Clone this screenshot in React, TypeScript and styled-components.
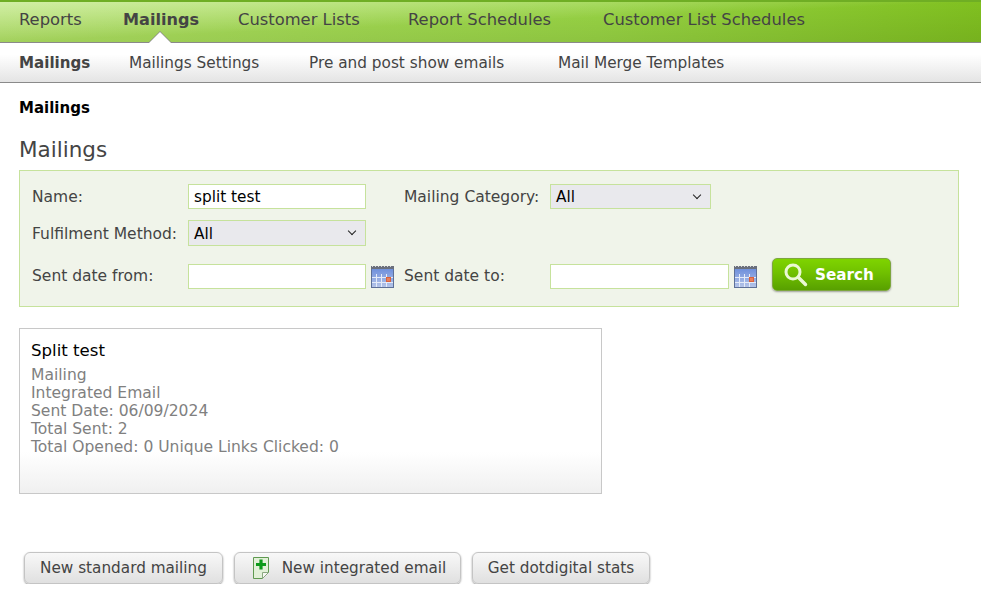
import React from 'react';
import styled, { createGlobalStyle } from 'styled-components';

const GlobalStyle = createGlobalStyle`
  html, body {
    margin: 0;
    padding: 0;
    background: #fff;
    font-family: 'DejaVu Sans', Verdana, sans-serif;
    font-size: 15px;
    color: #444;
  }
`;

const mainTabs = [
  { label: 'Reports', width: 104 },
  { label: 'Mailings', width: 115, active: true },
  { label: 'Customer Lists', width: 170 },
  { label: 'Report Schedules', width: 195 },
  { label: 'Customer List Schedules', width: 260 },
];

const subTabs = [
  { label: 'Mailings', width: 110, active: true },
  { label: 'Mailings Settings', width: 180 },
  { label: 'Pre and post show emails', width: 249 },
  { label: 'Mail Merge Templates', width: 200 },
];

const CalendarIcon = () => (
  <CalendarSvg viewBox="0 0 23 22" width="23" height="22">
    <defs>
      <linearGradient id="calBody" x1="0" y1="0" x2="0" y2="1">
        <stop offset="0" stopColor="#6f90dc" />
        <stop offset="1" stopColor="#b4c4e8" />
      </linearGradient>
    </defs>
    <rect x="0" y="0" width="23" height="22" fill="#5d7098" />
    <rect x="0" y="0" width="23" height="3" fill="#6a6f7c" />
    <path d="M1 0.500h1M4 0.500h1M7 0.500h1M10 0.500h1M13 0.500h1M16 0.500h1M19 0.500h1" stroke="#d8d8d8" />
    <rect x="1" y="3" width="21" height="18" fill="url(#calBody)" />
    <path d="M5.500 8v13M10.500 8v13M15.500 8v13M1 11.500h21M1 16.500h21" stroke="#e4ebf8" />
    <rect x="15.500" y="11.500" width="4" height="4" fill="#e8805c" stroke="#d9613c" />
  </CalendarSvg>
);

const SearchIcon = () => (
  <svg viewBox="0 0 24 24" width="24" height="24" fill="none">
    <circle cx="9" cy="9" r="7" stroke="#eaf8d4" strokeWidth="3" />
    <path d="M14.500 14.500l7 7" stroke="#eaf8d4" strokeWidth="3.400" strokeLinecap="round" />
  </svg>
);

const NewDocIcon = () => (
  <svg viewBox="0 0 18 24" width="18" height="24">
    <path d="M1.500 1.500h15v15l-6 6h-9z" fill="#e2f0d8" stroke="#5f9a50" />
    <path d="M16.500 16.500h-6v6z" fill="#f7f7f2" stroke="#8aa880" />
    <path d="M9 3.500v10M4 8.500h10" stroke="#0d9a1a" strokeWidth="3.200" />
  </svg>
);

export default function App() {
  return (
    <>
      <GlobalStyle />
      <MainNav>
        {mainTabs.map((tab) => (
          <MainTab key={tab.label} $width={tab.width} $active={tab.active}>
            {tab.label}
          </MainTab>
        ))}
      </MainNav>
      <SubNav>
        {subTabs.map((tab) => (
          <SubTab key={tab.label} $width={tab.width} $active={tab.active}>
            {tab.label}
          </SubTab>
        ))}
      </SubNav>
      <Content>
        <Breadcrumb>Mailings</Breadcrumb>
        <PageTitle>Mailings</PageTitle>
        <SearchForm>
          <FormRow $height={25} $gap={11}>
            <Label $width={156}>Name:</Label>
            <TextField $width={178} defaultValue="split test" />
            <Label $width={146} $indent={38}>Mailing Category:</Label>
            <SelectField $width={161}>All</SelectField>
          </FormRow>
          <FormRow $height={26} $gap={18}>
            <Label $width={156} $nudge={2}>Fulfilment Method:</Label>
            <SelectField $width={178} $nudge={2}>All</SelectField>
          </FormRow>
          <FormRow $height={25} $gap={0}>
            <Label $width={156} $nudge={-2}>Sent date from:</Label>
            <TextField $width={178} />
            <CalendarSlot><CalendarIcon /></CalendarSlot>
            <Label $width={146} $nudge={-2}>Sent date to:</Label>
            <TextField $width={179} />
            <CalendarSlot><CalendarIcon /></CalendarSlot>
            <SearchButton>
              <SearchIcon />
              Search
            </SearchButton>
          </FormRow>
        </SearchForm>
        <ResultCard>
          <CardTitle>Split test</CardTitle>
          <CardLine>Mailing</CardLine>
          <CardLine>Integrated Email</CardLine>
          <CardLine>Sent Date: 06/09/2024</CardLine>
          <CardLine>Total Sent: 2</CardLine>
          <CardLine>Total Opened: 0 Unique Links Clicked: 0</CardLine>
        </ResultCard>
        <Actions>
          <ActionButton $width={199}>New standard mailing</ActionButton>
          <ActionButton $width={227} $shift={3}>
            <NewDocIcon />
            New integrated email
          </ActionButton>
          <ActionButton $width={178}>Get dotdigital stats</ActionButton>
        </Actions>
      </Content>
    </>
  );
}

const MainNav = styled.nav`
  box-sizing: border-box;
  display: flex;
  height: 43px;
  padding-left: 19px;
  border-top: 2px solid #6fae24;
  border-bottom: 1px solid #8a8a8a;
  background:
    linear-gradient(to bottom right, rgba(255, 255, 255, 0.42) 0%, rgba(255, 255, 255, 0) 50%),
    linear-gradient(to bottom, rgba(0, 0, 0, 0) 0%, rgba(0, 0, 0, 0.08) 100%),
    linear-gradient(to right, #b0e264 0%, #98d444 61%, #80c020 100%);
`;

const MainTab = styled.div<{ $width: number; $active?: boolean }>`
  position: relative;
  width: ${(p) => p.$width}px;
  line-height: 35px;
  font-size: ${(p) => (p.$active ? 16.1 : 16.35)}px;
  font-weight: ${(p) => (p.$active ? 700 : 400)};
  color: #444;
  white-space: nowrap;
  ${(p) =>
    p.$active &&
    `&::after {
      content: '';
      position: absolute;
      left: 26px;
      bottom: -1px;
      border-left: 11px solid transparent;
      border-right: 11px solid transparent;
      border-bottom: 11px solid #fff;
      filter: drop-shadow(0 -1px 0 #8a8a8a);
    }`}
`;

const SubNav = styled.nav`
  box-sizing: border-box;
  display: flex;
  height: 40px;
  padding-left: 19px;
  border-bottom: 1px solid #8a8a8a;
  background: linear-gradient(to bottom, #fff 30%, #e4e4e4 100%);
`;

const SubTab = styled.div<{ $width: number; $active?: boolean }>`
  width: ${(p) => p.$width}px;
  line-height: 40px;
  font-size: ${(p) => (p.$active ? 15.1 : 15.3)}px;
  font-weight: ${(p) => (p.$active ? 700 : 400)};
  color: #444;
  white-space: nowrap;
`;

const Content = styled.main`
  padding: 0 22px 0 19px;
`;

const Breadcrumb = styled.div`
  margin-top: 16px;
  line-height: 18px;
  font-size: 15px;
  font-weight: 700;
  color: #000;
`;

const PageTitle = styled.h1`
  margin: 20px 0 7px;
  line-height: 26px;
  font-size: 21.500px;
  font-weight: 400;
  color: #444;
`;

const SearchForm = styled.form`
  box-sizing: border-box;
  height: 137px;
  padding: 13px 12px 0;
  border: 1px solid #c6e29c;
  background: #f0f4ea;
`;

const FormRow = styled.div<{ $height: number; $gap: number }>`
  display: flex;
  align-items: center;
  height: ${(p) => p.$height}px;
  margin-bottom: ${(p) => p.$gap}px;
`;

const Label = styled.label<{ $width: number; $indent?: number; $nudge?: number }>`
  flex: none;
  width: ${(p) => p.$width}px;
  margin-left: ${(p) => p.$indent || 0}px;
  margin-top: ${(p) => p.$nudge || 0}px;
  font-size: 15.500px;
  color: #444;
  white-space: nowrap;
`;

const TextField = styled.input<{ $width: number }>`
  box-sizing: border-box;
  flex: none;
  width: ${(p) => p.$width}px;
  height: 25px;
  padding: 0 5px;
  border: 1px solid #c6e29c;
  background: #fff;
  font-family: inherit;
  font-size: 15.300px;
  color: #000;
  outline: none;
`;

const SelectField = styled.div<{ $width: number; $nudge?: number }>`
  box-sizing: border-box;
  flex: none;
  position: relative;
  width: ${(p) => p.$width}px;
  height: 100%;
  padding: ${(p) => p.$nudge || 0}px 5px 0;
  display: flex;
  align-items: center;
  border: 1px solid #c6e29c;
  background: #e9e9ed;
  font-size: 15.300px;
  color: #000;
  &::after {
    content: '';
    position: absolute;
    right: 10px;
    top: 50%;
    width: 5px;
    height: 5px;
    margin-top: -5px;
    border-right: 1.500px solid #222;
    border-bottom: 1.500px solid #222;
    transform: rotate(45deg);
  }
`;

const CalendarSlot = styled.span`
  flex: none;
  display: flex;
  width: 38px;
  padding-left: 5px;
  box-sizing: border-box;
`;

const CalendarSvg = styled.svg`
  display: block;
`;

const SearchButton = styled.button`
  box-sizing: border-box;
  flex: none;
  display: flex;
  align-items: center;
  gap: 7px;
  width: 119px;
  height: 33px;
  margin: 0 0 5px 5px;
  padding: 2px 0 0 11px;
  border: 1px solid #7da63e;
  border-radius: 5px;
  background: linear-gradient(to bottom, #7fd400 0%, #70c000 45%, #58a000 100%);
  box-shadow: 0 1px 2px rgba(0, 0, 0, 0.35);
  font-family: inherit;
  font-size: 15.200px;
  font-weight: 700;
  color: #fff;
`;

const ResultCard = styled.section`
  box-sizing: border-box;
  width: 583px;
  height: 166px;
  margin-top: 21px;
  padding: 12px 11px 0;
  border: 1px solid #c8c8c8;
  background: linear-gradient(to bottom, #fff 0%, #fff 75%, #f0f0f0 100%);
`;

const CardTitle = styled.h2`
  margin: 0 0 5px;
  line-height: 20px;
  font-size: 16.600px;
  font-weight: 400;
  color: #000;
`;

const CardLine = styled.div`
  line-height: 18px;
  font-size: 15.550px;
  color: #808080;
`;

const Actions = styled.div`
  display: flex;
  gap: 11px;
  margin-top: 58px;
  padding-left: 5px;
`;

const ActionButton = styled.button<{ $width: number; $shift?: number }>`
  box-sizing: border-box;
  display: flex;
  align-items: center;
  justify-content: center;
  gap: 12px;
  width: ${(p) => p.$width}px;
  height: 32px;
  padding: 0 0 0 ${(p) => p.$shift || 0}px;
  border: 1px solid #c4c4c4;
  border-radius: 6px;
  background: linear-gradient(to bottom, #f8f8f8 0%, #e0e0e0 100%);
  box-shadow: 0 1px 2px rgba(0, 0, 0, 0.4);
  font-family: inherit;
  font-size: 15.250px;
  color: #444;
`;
